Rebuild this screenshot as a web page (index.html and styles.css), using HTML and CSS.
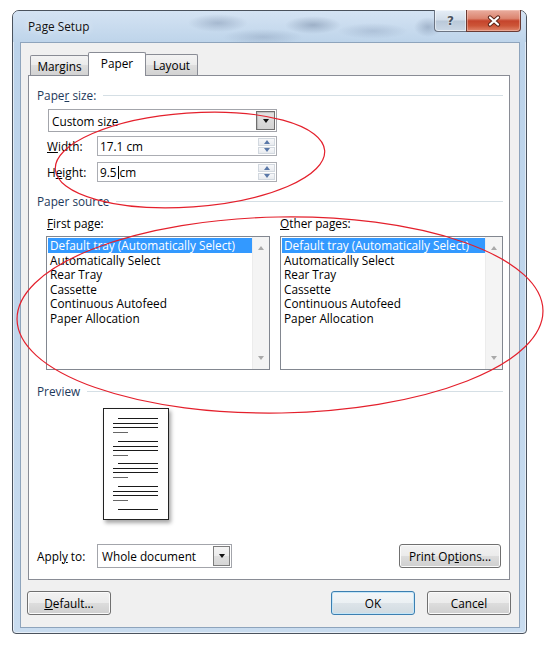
FILE: index.html
```html
<!DOCTYPE html>
<html lang="en">
<head>
<meta charset="utf-8">
<title>Page Setup</title>
<link rel="stylesheet" href="styles.css">
</head>
<body>
<div class="window">
  <div class="titlebar">
    <span class="title">Page Setup</span>
    <div class="caption">
      <div class="cbtn help"><span>?</span></div>
      <div class="cbtn close">
        <svg width="14" height="12" viewBox="0 0 14 12"><path d="M3 2.5 L11 9.5 M11 2.5 L3 9.5" stroke="#5b2418" stroke-width="4.2" stroke-linecap="round" fill="none"/><path d="M3 2.5 L11 9.5 M11 2.5 L3 9.5" stroke="#fff" stroke-width="2.3" stroke-linecap="round" fill="none"/></svg>
      </div>
    </div>
  </div>
  <div class="client">
    <div class="tabs">
      <div class="tab t-margins">Margins</div>
      <div class="tab active">Paper</div>
      <div class="tab t-layout">Layout</div>
    </div>
    <div class="panel">
      <div class="gh"><span>Pape<u>r</u> size:</span></div>
      <div class="combo combo-size">
        <div class="combo-text">Custom size</div>
        <div class="combo-btn pressed"><i class="arr-down"></i></div>
      </div>
      <div class="frow frow-first">
        <div class="flabel"><u>W</u>idth:</div>
        <div class="spin">
          <div class="spin-text">17.1 cm</div>
          <div class="spin-btns"><div class="sb"><i class="s-up"></i></div><div class="sb"><i class="s-down"></i></div></div>
        </div>
      </div>
      <div class="frow">
        <div class="flabel">H<u>e</u>ight:</div>
        <div class="spin">
          <div class="spin-text">9.5<span class="caret"></span>cm</div>
          <div class="spin-btns"><div class="sb"><i class="s-up"></i></div><div class="sb"><i class="s-down"></i></div></div>
        </div>
      </div>
      <div class="gh gh-source"><span>Paper source</span></div>
      <div class="lists">
        <div class="lcol lcol-first">
          <div class="llabel"><u>F</u>irst page:</div>
          <div class="listbox">
            <ul class="items">
              <li class="sel">Default tray (Automatically Select)</li>
              <li>Automatically Select</li>
              <li>Rear Tray</li>
              <li>Cassette</li>
              <li>Continuous Autofeed</li>
              <li>Paper Allocation</li>
            </ul>
            <div class="vscroll"><i class="g-up"></i><i class="g-down"></i></div>
          </div>
        </div>
        <div class="lcol lcol-other">
          <div class="llabel"><u>O</u>ther pages:</div>
          <div class="listbox">
            <ul class="items">
              <li class="sel">Default tray (Automatically Select)</li>
              <li>Automatically Select</li>
              <li>Rear Tray</li>
              <li>Cassette</li>
              <li>Continuous Autofeed</li>
              <li>Paper Allocation</li>
            </ul>
            <div class="vscroll"><i class="g-up"></i><i class="g-down"></i></div>
          </div>
        </div>
      </div>
      <div class="gh gh-preview"><span>Preview</span></div>
      <div class="preview">
        <svg width="66" height="112" viewBox="0 0 66 112">
          <g stroke="#1a1a1a" stroke-width="1">
            <path d="M15 10.5H55M10 15.5H55M10 19.5H55"/>
            <path d="M15 33.5H55M10 38.5H55M10 42.5H55"/>
            <path d="M15 55.5H55M10 60.5H55M10 64.5H55"/>
            <path d="M15 78.5H55M10 83.5H55M10 87.5H55"/>
            <path d="M15 101.5H55"/>
          </g>
          <g stroke="#666" stroke-width="1">
            <path d="M10 24.5H25M10 47.5H25M10 69.5H25M10 92.5H25"/>
          </g>
        </svg>
      </div>
      <div class="apply">
        <div class="alabel">Appl<u>y</u> to:</div>
        <div class="combo combo-apply">
          <div class="combo-text">Whole document</div>
          <div class="combo-btn small"><i class="arr-down"></i></div>
        </div>
        <div class="btn btn-print">Print Op<u>t</u>ions...</div>
      </div>
    </div>
    <div class="footer">
      <div class="btn btn-default"><u>D</u>efault...</div>
      <div class="btn btn-ok">OK</div>
      <div class="btn btn-cancel">Cancel</div>
    </div>
  </div>
</div>
<svg class="annot" width="553" height="646" viewBox="0 0 553 646">
  <ellipse cx="190" cy="160" rx="135" ry="47" transform="rotate(-4 190 160)" fill="none" stroke="#e4202c" stroke-width="1.2"/>
  <ellipse cx="280" cy="315" rx="263" ry="98" transform="rotate(-1 280 315)" fill="none" stroke="#e4202c" stroke-width="1.2"/>
</svg>
</body>
</html>
```
FILE: styles.css
```css
* { box-sizing: border-box; }

body {
  margin: 0;
  width: 553px;
  height: 646px;
  background: #fff;
  font-family: "Open Sans", "Noto Sans", sans-serif;
  font-size: 11.8px;
  color: #000;
  position: relative;
  overflow: hidden;
}

u { text-decoration: underline; text-underline-offset: 1px; text-decoration-thickness: 1px; }

/* ---------- window frame ---------- */
.window {
  margin: 10px 0 0 12px;
  width: 515px;
  height: 624px;
  border: 1px solid #4a525d;
  border-radius: 7px 7px 4px 4px;
  padding: 0 6px 5px 7px;
  display: flex;
  flex-direction: column;
  background:
    linear-gradient(to bottom, #d2e2f2 0px, #bcd3ea 34px, #c0d6ec 300px, #c9dcef 100%);
  box-shadow: inset 0 0 0 1px rgba(255,255,255,0.55);
}

.titlebar {
  height: 31px;
  display: flex;
  align-items: flex-start;
  margin: 0 -6px 0 -7px;
  padding: 0 6px 0 7px;
  border-radius: 6px 6px 0 0;
  background:
    radial-gradient(ellipse 30px 9px at 205px 12px, rgba(110,130,160,0.4), transparent),
    radial-gradient(ellipse 40px 8px at 250px 26px, rgba(110,130,160,0.3), transparent),
    radial-gradient(ellipse 28px 9px at 300px 14px, rgba(90,110,140,0.4), transparent),
    radial-gradient(ellipse 35px 8px at 360px 20px, rgba(120,140,170,0.3), transparent),
    radial-gradient(ellipse 14px 10px at 415px 16px, rgba(90,110,140,0.35), transparent),
    linear-gradient(to bottom, #d4e3f3, #bed4ea);
}

.title {
  margin: 7px 0 0 8px;
  font-size: 11.8px;
  line-height: 17px;
  color: #111;
  text-shadow: 0 0 6px rgba(255,255,255,0.9);
}

.caption {
  margin-left: auto;
  margin-right: -1px;
  margin-top: -1px;
  display: flex;
}

.cbtn {
  height: 22px;
  display: flex;
  align-items: center;
  justify-content: center;
}

.help {
  width: 32px;
  border: 1px solid #6b7482;
  border-top: none;
  border-right: none;
  border-radius: 0 0 0 4px;
  background: linear-gradient(to bottom, #e6eef7 0%, #d2dde9 48%, #b9c8d8 52%, #cbd8e6 100%);
  box-shadow: inset 0 0 0 1px rgba(255,255,255,0.5);
}
.help span {
  font-family: "DejaVu Sans", sans-serif;
  font-weight: bold;
  font-size: 12px;
  color: #4a525c;
  text-shadow: 0 0 2px #fff;
  line-height: 1;
}

.close {
  width: 55px;
  border: 1px solid #6a3a33;
  border-top: none;
  border-radius: 0 0 4px 0;
  background: linear-gradient(to bottom, #e9ad9f 0%, #dc8570 40%, #c5442c 52%, #cc5538 75%, #e0866c 100%);
  box-shadow: inset 0 0 0 1px rgba(255,220,210,0.4);
}

/* ---------- client area ---------- */
.client {
  flex: 1;
  background: #f0f0f0;
  border: 1px solid #8ea4bc;
  padding: 9px 9px 0 7px;
  display: flex;
  flex-direction: column;
}

.tabs {
  display: flex;
  align-items: flex-end;
  height: 23px;
  padding-left: 2px;
  position: relative;
  z-index: 1;
}

.tab {
  height: 20px;
  border: 1px solid #898c95;
  border-bottom: none;
  border-radius: 2px 2px 0 0;
  background: linear-gradient(to bottom, #f3f3f3 0%, #ebebeb 50%, #dedede 50%, #d2d2d2 100%);
  display: flex;
  align-items: center;
  justify-content: center;
  line-height: 15px;
  padding-top: 1px;
}
.t-margins { width: 59px; }
.tab.active {
  width: 58px;
  height: 24px;
  margin-left: -1px;
  margin-bottom: -1px;
  background: #fff;
  padding-bottom: 3px;
}
.t-layout { width: 53px; height: 21px; margin-left: -1px; }

.panel {
  height: 505px;
  border: 1px solid #898c95;
  background: #fff;
  padding: 12px 6px 0 8px;
  display: flex;
  flex-direction: column;
}

/* group headers */
.gh {
  display: flex;
  align-items: center;
  height: 15px;
  line-height: 15px;
  color: #1e395b;
}
.gh::after {
  content: "";
  flex: 1;
  height: 1px;
  background: #d5dfe5;
  margin-left: 7px;
}
.gh-source { margin-top: 12px; }
.gh-preview { margin-top: 14px; }

/* combo boxes */
.combo {
  display: flex;
  border: 1px solid #a3a5ab;
  background: #fff;
}
.combo-size {
  margin: 6px 0 0 11px;
  width: 229px;
  height: 23px;
}
.combo-text {
  flex: 1;
  padding-left: 3px;
  display: flex;
  align-items: center;
}
.combo-btn {
  width: 19px;
  display: flex;
  align-items: center;
  justify-content: center;
}
.combo-btn.pressed {
  margin: 1px;
  width: 19px;
  border: 1px solid #6f6f6f;
  background: linear-gradient(to bottom, #e3e3e3, #d3d3d3);
  box-shadow: inset 1px 1px 1px rgba(0,0,0,0.15);
}
.combo-btn.small {
  margin: 1px;
  width: 17px;
  border: 1px solid #7d7d7d;
  background: linear-gradient(to bottom, #f4f4f4 0%, #ececec 50%, #dfdfdf 50%, #d6d6d6 100%);
}
.arr-down {
  width: 0;
  height: 0;
  border-left: 3.5px solid transparent;
  border-right: 3.5px solid transparent;
  border-top: 4px solid #111;
}

/* spin fields */
.frow {
  display: flex;
  align-items: center;
  margin-top: 6px;
  height: 20px;
}
.frow-first { margin-top: 4px; }
.flabel {
  margin-left: 10px;
  width: 50px;
}
.spin {
  width: 180px;
  height: 20px;
  border: 1px solid #abadb3;
  display: flex;
  background: #fff;
}
.spin-text {
  flex: 1;
  padding-left: 2px;
  display: flex;
  align-items: center;
}
.caret {
  display: inline-block;
  width: 1px;
  height: 13px;
  background: #000;
  margin: 0 1px 0 1px;
}
.spin-btns {
  width: 17px;
  margin: 1px 1px 1px 0;
  display: flex;
  flex-direction: column;
  gap: 1px;
}
.sb {
  flex: 1;
  border: 1px solid #d2d8df;
  background: linear-gradient(to bottom, #f7f8fa, #e8ebef);
  display: flex;
  align-items: center;
  justify-content: center;
}
.s-up, .s-down {
  width: 0;
  height: 0;
  border-left: 3.5px solid transparent;
  border-right: 3.5px solid transparent;
}
.s-up { border-bottom: 4px solid #5a78a8; }
.s-down { border-top: 4px solid #5a78a8; }

/* list boxes */
.lists {
  display: flex;
  margin-top: 7px;
}
.lcol-first { margin-left: 9px; width: 224px; }
.lcol-other { margin-left: 10px; width: 223px; }
.llabel {
  height: 15px;
  line-height: 15px;
}
.lcol-first .llabel { padding-left: 1px; }
.listbox {
  margin-top: 5px;
  height: 134px;
  border: 1px solid #828790;
  display: flex;
  background: #fff;
}
.items {
  list-style: none;
  margin: 0;
  padding: 1px 0 0 1px;
  flex: 1;
  min-width: 0;
}
.items li {
  height: 14.6px;
  line-height: 14.6px;
  padding-left: 2px;
  white-space: nowrap;
  overflow: hidden;
}
.items li.sel {
  background: #3399ff;
  color: #fff;
}
.vscroll {
  width: 17px;
  flex: none;
  background: #f4f4f4;
  border-left: 1px solid #ececec;
  display: flex;
  flex-direction: column;
  justify-content: space-between;
  align-items: center;
  padding: 9px 0 9px;
}
.g-up, .g-down {
  width: 0;
  height: 0;
  border-left: 3.5px solid transparent;
  border-right: 3.5px solid transparent;
}
.g-up { border-bottom: 4px solid #a9a9a9; }
.g-down { border-top: 4px solid #a9a9a9; }

/* preview */
.preview {
  margin: 9px 0 0 66px;
  width: 66px;
  height: 112px;
  border: 1px solid #222;
  background: #fff;
  box-shadow: 2px 3px 4px rgba(0,0,0,0.35);
}
.preview svg { display: block; margin: -1px 0 0 -1px; }

/* apply row */
.apply {
  margin-top: 24px;
  display: flex;
  align-items: center;
  height: 24px;
}
.alabel { width: 60px; }
.combo-apply {
  width: 135px;
  height: 24px;
}
.combo-apply .combo-text { padding-left: 4px; }

/* buttons */
.btn {
  height: 24px;
  border: 1px solid #707070;
  border-radius: 3px;
  background: linear-gradient(to bottom, #f2f2f2 0%, #ebebeb 50%, #dddddd 50%, #cfcfcf 100%);
  box-shadow: inset 0 0 0 1px #fbfbfb;
  display: flex;
  align-items: center;
  justify-content: center;
}
.btn-print {
  margin-left: auto;
  margin-right: 2px;
  width: 102px;
}
.footer {
  display: flex;
  margin: 11px -1px 0 -1px;
}
.btn-default { width: 84px; }
.btn-ok {
  margin-left: auto;
  width: 84px;
  border-color: #3c7fb1;
  box-shadow: inset 0 0 0 1px #c4e6f8;
  background: linear-gradient(to bottom, #f3f6f8 0%, #ebf0f3 50%, #dde4e9 50%, #d1dbe1 100%);
}
.btn-cancel {
  margin-left: 12px;
  width: 84px;
}

/* annotation overlay */
.annot {
  position: absolute;
  left: 0;
  top: 0;
  pointer-events: none;
}
```
